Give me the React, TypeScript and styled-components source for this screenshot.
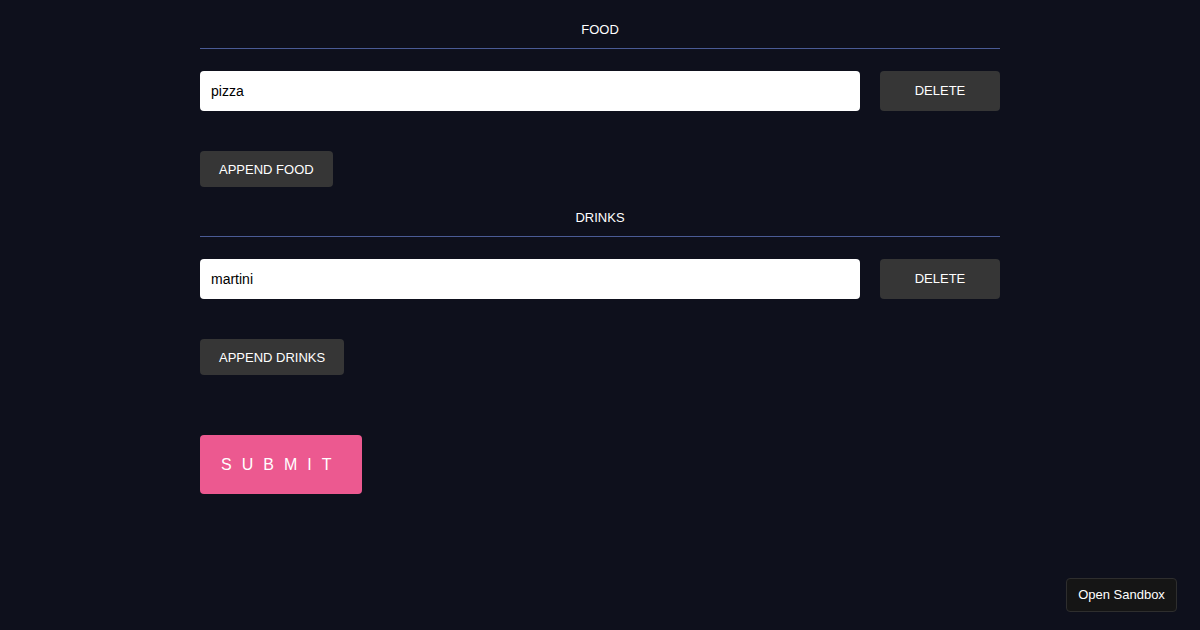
import React, { useState } from "react";
import styled, { createGlobalStyle } from "styled-components";

const GlobalStyle = createGlobalStyle`
  body {
    margin: 0;
    background: #0e101c;
    font-family: "Liberation Sans", Arial, sans-serif;
    color: #fff;
  }
`;

const Form = styled.form`
  width: 800px;
  margin: 0 auto;
  display: flex;
  flex-direction: column;
`;

const Section = styled.section<{ $top: number }>`
  display: flex;
  flex-direction: column;
  padding-top: ${(p) => p.$top}px;
`;

const Heading = styled.div`
  text-align: center;
  font-size: 13px;
  line-height: 20px;
  padding-bottom: 8px;
  border-bottom: 1px solid #4a5b95;
`;

const Row = styled.div`
  display: flex;
  gap: 20px;
  margin-top: 22px;
`;

const Input = styled.input`
  flex: 1;
  height: 40px;
  box-sizing: border-box;
  border: none;
  border-radius: 4px;
  padding: 0 11px;
  font-family: "Liberation Sans", Arial, sans-serif;
  font-size: 14px;
  color: #000;
  background: #fff;
  outline: none;
`;

const Button = styled.button<{ $wide?: boolean }>`
  height: ${(p) => (p.$wide ? 40 : 36)}px;
  width: ${(p) => (p.$wide ? "120px" : "auto")};
  padding: ${(p) => (p.$wide ? "0 0 2px" : "0 19px")};
  border: none;
  border-radius: 4px;
  background: #363636;
  color: #fff;
  font-family: "Liberation Sans", Arial, sans-serif;
  font-size: 13px;
  text-transform: uppercase;
  cursor: pointer;
`;

const AppendButton = styled(Button)`
  align-self: flex-start;
  margin-top: 40px;
`;

const Submit = styled.button`
  align-self: flex-start;
  margin-top: 60px;
  height: 59px;
  padding: 0 21px;
  border: none;
  border-radius: 4px;
  background: #ec5990;
  color: #fff;
  font-family: "Liberation Sans", Arial, sans-serif;
  font-size: 16px;
  letter-spacing: 10px;
  text-transform: uppercase;
  cursor: pointer;
`;

const SandboxLink = styled.button`
  position: fixed;
  right: 23px;
  bottom: 18px;
  height: 34px;
  width: 111px;
  border: 1px solid #2e2e2e;
  border-radius: 4px;
  background: #151515;
  color: #fff;
  font-family: "Liberation Sans", Arial, sans-serif;
  font-size: 13px;
  padding: 0 0 1px;
`;

type Group = { name: string; items: string[] };

export default function App() {
  const [groups, setGroups] = useState<Group[]>([
    { name: "food", items: ["pizza"] },
    { name: "drinks", items: ["martini"] },
  ]);

  const update = (g: number, fn: (items: string[]) => string[]) =>
    setGroups((prev) =>
      prev.map((grp, i) => (i === g ? { ...grp, items: fn(grp.items) } : grp))
    );

  return (
    <>
      <GlobalStyle />
      <Form onSubmit={(e) => e.preventDefault()}>
        {groups.map((grp, g) => (
          <Section key={grp.name} $top={g === 0 ? 20 : 21}>
            <Heading>{grp.name.toUpperCase()}</Heading>
            {grp.items.map((item, i) => (
              <Row key={i}>
                <Input
                  value={item}
                  onChange={(e) =>
                    update(g, (items) =>
                      items.map((v, j) => (j === i ? e.target.value : v))
                    )
                  }
                />
                <Button
                  type="button"
                  $wide
                  onClick={() => update(g, (items) => items.filter((_, j) => j !== i))}
                >
                  Delete
                </Button>
              </Row>
            ))}
            <AppendButton type="button" onClick={() => update(g, (items) => [...items, ""])}>
              Append {grp.name}
            </AppendButton>
          </Section>
        ))}
        <Submit type="submit">Submit</Submit>
      </Form>
      <SandboxLink type="button">Open Sandbox</SandboxLink>
    </>
  );
}
